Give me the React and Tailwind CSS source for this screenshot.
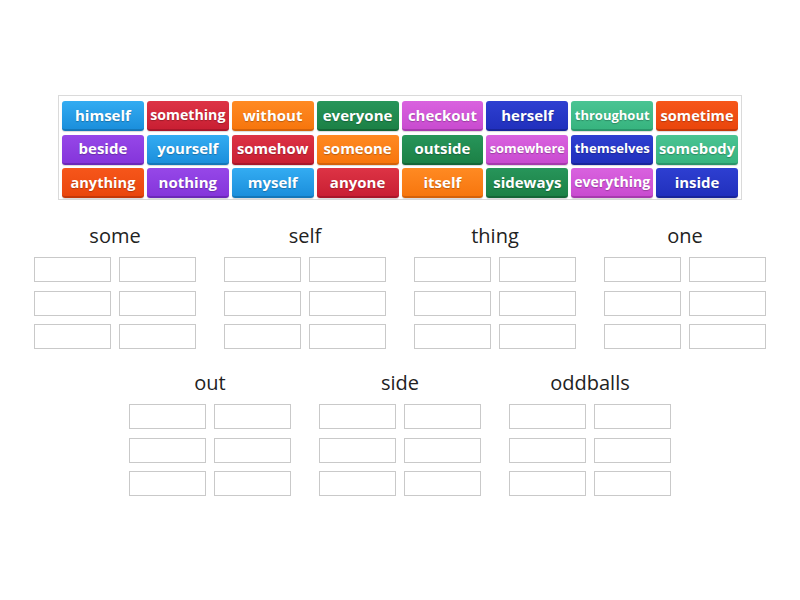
import React from 'react';

const colors = {
  sky: 'bg-linear-to-b from-[#33acf2] to-[#1b8fdc] border-[#1577b9]',
  red: 'bg-linear-to-b from-[#dd3345] to-[#c91f33] border-[#a8172a]',
  orange: 'bg-linear-to-b from-[#ff8a22] to-[#f7760c] border-[#d4620a]',
  green: 'bg-linear-to-b from-[#27955a] to-[#1c8146] border-[#156637]',
  orchid: 'bg-linear-to-b from-[#d962df] to-[#c94bd0] border-[#a73aae]',
  navy: 'bg-linear-to-b from-[#2e3fd1] to-[#2130bd] border-[#19259a]',
  mint: 'bg-linear-to-b from-[#4ac493] to-[#37b47f] border-[#2a966a]',
  flame: 'bg-linear-to-b from-[#f6561a] to-[#ea460c] border-[#c4390a]',
  purple: 'bg-linear-to-b from-[#9647e8] to-[#8535db] border-[#6c28b8]',
};

const tiles = [
  { word: 'himself', color: 'sky', size: 'text-[15px]' },
  { word: 'something', color: 'red', size: 'text-[14.2px]' },
  { word: 'without', color: 'orange', size: 'text-[15px]' },
  { word: 'everyone', color: 'green', size: 'text-[15px]' },
  { word: 'checkout', color: 'orchid', size: 'text-[15px]' },
  { word: 'herself', color: 'navy', size: 'text-[15px]' },
  { word: 'throughout', color: 'mint', size: 'text-[13px]' },
  { word: 'sometime', color: 'flame', size: 'text-[14.6px]' },
  { word: 'beside', color: 'purple', size: 'text-[15px]' },
  { word: 'yourself', color: 'sky', size: 'text-[15px]' },
  { word: 'somehow', color: 'red', size: 'text-[14.8px]' },
  { word: 'someone', color: 'orange', size: 'text-[15px]' },
  { word: 'outside', color: 'green', size: 'text-[15px]' },
  { word: 'somewhere', color: 'orchid', size: 'text-[12.9px]' },
  { word: 'themselves', color: 'navy', size: 'text-[13.2px]' },
  { word: 'somebody', color: 'mint', size: 'text-[14.8px]' },
  { word: 'anything', color: 'flame', size: 'text-[14.6px]' },
  { word: 'nothing', color: 'purple', size: 'text-[15px]' },
  { word: 'myself', color: 'sky', size: 'text-[15px]' },
  { word: 'anyone', color: 'red', size: 'text-[15px]' },
  { word: 'itself', color: 'orange', size: 'text-[15px]' },
  { word: 'sideways', color: 'green', size: 'text-[15px]' },
  { word: 'everything', color: 'orchid', size: 'text-[14.1px]' },
  { word: 'inside', color: 'navy', size: 'text-[15px]' },
];

function Group({ label }) {
  return (
    <div className="flex w-[162px] flex-col items-center">
      <div className="text-[20px] leading-[30px] text-[#222]">{label}</div>
      <div className="mt-[6px] grid grid-cols-2 gap-x-[8px] gap-y-[8.5px]">
        {[0, 1, 2, 3, 4, 5].map(i => (
          <div key={i} className="h-[25px] w-[77px] border border-[#c9c9c9] bg-white" />
        ))}
      </div>
    </div>
  );
}

export default function App() {
  return (
    <div className="h-[600px] w-[800px] overflow-hidden bg-white font-['Open_Sans',sans-serif]">
      <div className="mx-auto mt-[95px] w-[684px] border border-[#dadada] px-[3px] pt-[5px] pb-[1px]">
        <div className="grid grid-cols-8 gap-x-[3px] gap-y-[3.5px]">
          {tiles.map(t => (
            <div
              key={t.word}
              className={`flex h-[30px] items-center justify-center overflow-hidden whitespace-nowrap rounded-[3px] border-b-2 font-bold leading-none text-white shadow-[0_1px_1px_rgba(0,0,0,0.15)] [text-shadow:0_1px_1px_rgba(0,0,0,0.25)] ${colors[t.color]} ${t.size}`}
            >
              {t.word}
            </div>
          ))}
        </div>
      </div>

      <div className="mt-[21px] flex flex-col items-center gap-y-[19px]">
        <div className="flex gap-x-[28px]">
          <Group label="some" />
          <Group label="self" />
          <Group label="thing" />
          <Group label="one" />
        </div>
        <div className="flex gap-x-[28px]">
          <Group label="out" />
          <Group label="side" />
          <Group label="oddballs" />
        </div>
      </div>
    </div>
  );
}
